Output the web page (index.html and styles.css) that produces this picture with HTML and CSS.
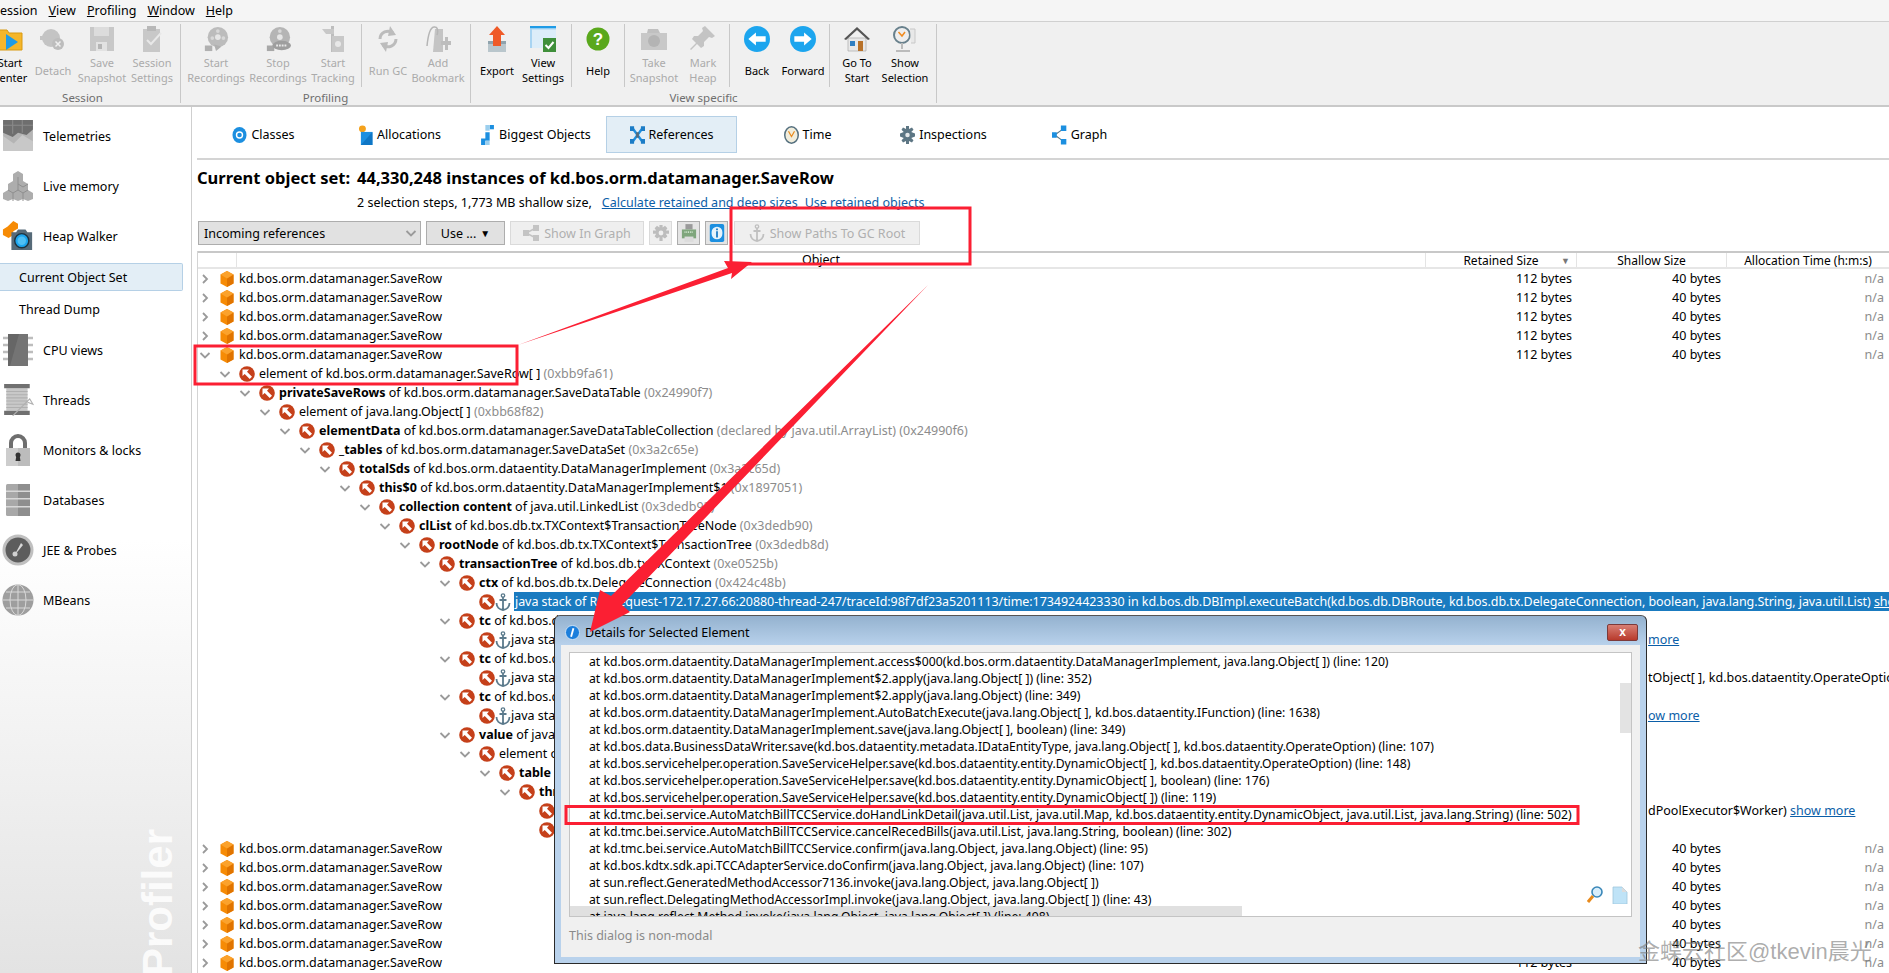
FILE: index.html
```html
<!DOCTYPE html>
<html lang="en">
<head>
<meta charset="utf-8">
<title>JProfiler Heap Walker</title>
<link rel="stylesheet" href="styles.css">
</head>
<body>
<svg class="sprite" aria-hidden="true">
  <symbol id="i-chev-r" viewBox="0 0 14 14"><path d="M5 3l4 4-4 4" fill="none" stroke="#9a9a9a" stroke-width="1.8"/></symbol>
  <symbol id="i-chev-d" viewBox="0 0 14 14"><path d="M2.5 5l4.5 4.5L11.500 5" fill="none" stroke="#9a9a9a" stroke-width="1.8"/></symbol>
  <symbol id="i-cube" viewBox="0 0 16 16"><path d="M8 0l6.500 3.500v9L8 16l-6.500-3.500v-9z" fill="#f68b05"/><path d="M8 7.500L14.500 3.500v9L8 16z" fill="#e07400"/><path d="M8 0l6.500 3.500L8 7.500 1.500 3.500z" fill="#fba22c"/></symbol>
  <symbol id="i-ref" viewBox="0 0 16 16"><circle cx="8" cy="8" r="7.800" fill="#c5401a"/><path d="M3.500 3.500h6.500L8 5.700l5 5-2.300 2.300-5-5-2.200 2z" fill="#fff"/></symbol>
  <symbol id="i-anchor" viewBox="0 0 16 18"><circle cx="8" cy="2.500" r="1.700" fill="none" stroke="#5b7a8c" stroke-width="1.300"/><path d="M8 4v13M4.500 7h7M1.500 10c0 4 3 6.500 6.500 7 3.500-.5 6.500-3 6.500-7" fill="none" stroke="#5b7a8c" stroke-width="1.800"/></symbol>

  <symbol id="t-start" viewBox="0 0 26 24"><path d="M1 3h9l2 3h13v17H1z" fill="#f5b62a" stroke="#d99a10"/><path d="M9 7l12 8-12 8z" fill="#1f9be6"/></symbol>
  <symbol id="t-detach" viewBox="0 0 26 24"><ellipse cx="11" cy="11" rx="9" ry="9" fill="#c4c4c4"/><path d="M0 9h6v4H0z" fill="#c4c4c4"/><circle cx="18" cy="17" r="6" fill="#bdbdbd"/><path d="M15.500 14.500l5 5m0-5l-5 5" stroke="#efefef" stroke-width="1.500"/></symbol>
  <symbol id="t-save" viewBox="0 0 26 24"><path d="M1 0h24v24H1z" fill="#c8c8c8"/><path d="M5 0h15v9H5z" fill="#dcdcdc"/><path d="M7 15h11v9H7z" fill="#e2e2e2"/><path d="M9 17h4v5H9z" fill="#b5b5b5"/></symbol>
  <symbol id="t-clip" viewBox="0 0 26 26"><path d="M4 3h17v23H4z" fill="#c8c8c8"/><path d="M8 0h9v5H8z" fill="#b8b8b8"/><path d="M8 14l4 4 10-11" fill="none" stroke="#e8e8e8" stroke-width="2"/></symbol>
  <symbol id="t-reel" viewBox="0 0 28 26"><circle cx="16" cy="11" r="11" fill="#bcbcbc"/><circle cx="16" cy="11" r="3" fill="#e6e6e6"/><circle cx="16" cy="4.500" r="2" fill="#d8d8d8"/><circle cx="10" cy="12" r="2" fill="#d8d8d8"/><circle cx="22" cy="12" r="2" fill="#d8d8d8"/><path d="M2 20h8v6H2z" fill="#b0b0b0"/><path d="M14 26l6-5-8-2z" fill="#b0b0b0"/></symbol>
  <symbol id="t-stop" viewBox="0 0 28 26"><circle cx="16" cy="11" r="11" fill="#b5b5b5"/><circle cx="16" cy="11" r="3" fill="#e6e6e6"/><circle cx="16" cy="4.500" r="2" fill="#d8d8d8"/><path d="M2 20h8v6H2z" fill="#a8a8a8"/><ellipse cx="18" cy="20" rx="10" ry="5" fill="#9e9e9e"/><path d="M12 20h12" stroke="#e8e8e8" stroke-width="2" stroke-dasharray="2 1"/></symbol>
  <symbol id="t-track" viewBox="0 0 26 26"><path d="M11 0h3v26h-3z" fill="#bdbdbd"/><path d="M2 3h12v5H6z" fill="#c8c8c8"/><path d="M12 10h12v16H12z" fill="#c8c8c8"/><circle cx="18" cy="18" r="3" fill="#e8e8e8"/></symbol>
  <symbol id="t-gc" viewBox="0 0 26 26"><path d="M5 13a8 8 0 0 1 13-6M21 13a8 8 0 0 1-13 6" fill="none" stroke="#bcbcbc" stroke-width="3"/><path d="M15 0l6 9-8 1zM11 26l-6-9 8-1z" fill="#bcbcbc"/></symbol>
  <symbol id="t-mark" viewBox="0 0 26 26"><path d="M10 3h8v23H8z" fill="#c4c4c4"/><path d="M2 20C3 10 5 0 10 1c3 0 3 5 2 8" fill="none" stroke="#b5b5b5" stroke-width="1.500"/><path d="M16 15h4v-4h3v4h3v4h-3v5h-3v-5h-4z" fill="#bdbdbd"/></symbol>
  <symbol id="t-export" viewBox="0 0 20 26"><path d="M1 15h18v11H1z" fill="#b9c6cc"/><path d="M1 15h18v3H1z" fill="#8fa3ad"/><path d="M10 0l8 9h-4v11H6V9H2z" fill="#ef5a28"/></symbol>
  <symbol id="t-view" viewBox="0 0 26 26"><path d="M0 0h26v22H0z" fill="#dcedf9"/><path d="M0 0h26v2.500H0z" fill="#1f9be6"/><path d="M0 2.500h26v1H0zM0 3.500v18.500h2V3.500z" fill="#a8d4f2"/><path d="M13 12h13v14H13z" fill="#3f8f3a"/><path d="M15.500 19l3 3 5-6" fill="none" stroke="#fff" stroke-width="2"/></symbol>
  <symbol id="t-cam" viewBox="0 0 26 22"><path d="M0 5h26v17H0z" fill="#c8c8c8"/><path d="M7 1h10l2 4H6z" fill="#c0c0c0"/><circle cx="13" cy="13" r="6" fill="#b4b4b4"/></symbol>
  <symbol id="t-pin" viewBox="0 0 26 26"><path d="M15 0l10 10-3 2-3-1-5 5 0 4-3 2-4-4-6 6-1-1 6-6-4-4 2-3 4 0 5-5-1-3z" fill="#c4c4c4"/></symbol>
  <symbol id="t-back" viewBox="0 0 24 24"><circle cx="12" cy="12" r="12" fill="#1ca5ee"/><path d="M4 12l7-6v3.500h9v5h-9V18z" fill="#fff"/></symbol>
  <symbol id="t-fwd" viewBox="0 0 24 24"><circle cx="12" cy="12" r="12" fill="#1ca5ee"/><path d="M20 12l-7-6v3.500H4v5h9V18z" fill="#fff"/></symbol>
  <symbol id="t-home" viewBox="0 0 26 26"><path d="M4 12h18v13H4z" fill="#e8e8e8" stroke="#aaa" stroke-width=".7"/><path d="M0 13L13 1l13 12-2 1L13 4 2 14z" fill="#555"/><path d="M14 15h5v10h-5z" fill="#b8722a"/><path d="M6 15h5v5H6z" fill="#2f7fc2"/></symbol>
  <symbol id="t-clock" viewBox="0 0 24 26"><circle cx="9" cy="9" r="8" fill="#eee" stroke="#68808c" stroke-width="2"/><path d="M5.500 6L9 10l3-4" fill="none" stroke="#f08a1e" stroke-width="1.500"/><path d="M9 17v6M3 25h14" stroke="#bbb" stroke-width="2"/><path d="M17 3h5v14h-4" fill="#e8e8e8" stroke="#c8c8c8"/></symbol>

  <symbol id="s-tele" viewBox="0 0 30 30"><rect x="1" y="0" width="28" height="29" rx="2" fill="#b4b4b4"/><path d="M1 0h28v9l-6 5-8-2-5 4-9-4z" fill="#6e6e6e"/><path d="M1 15l10 7 8-8 10 6v9H1z" fill="#c8c8c8"/><path d="M10 0v13M19 0v12M1 5h28" stroke="#8a8a8a"/></symbol>
  <symbol id="s-live" viewBox="0 0 32 30"><path d="M16 0l5 3v7l5 3v6l5 3v6l-5 2-5-2-5 2-5-2-5 2-5-2v-6l5-3v-6l5-3V3z" fill="#adadad"/><path d="M16 6v7l5 3 5-3M6 19l5 3 5-3 5 3 5-3M11 22v8M21 22v8M16 13v6" fill="none" stroke="#8f8f8f"/></symbol>
  <symbol id="s-heap" viewBox="0 0 34 32"><path d="M12 0l5 3v5l-5 3v4l-5 3-6-3V9l5-3z" fill="#f68b05"/><path d="M10 12h5l2-3h8l2 3h5v19H10z" fill="#566a78"/><circle cx="21" cy="21" r="7.500" fill="#1ca5ee" stroke="#1d3340" stroke-width="1.500"/><circle cx="21" cy="21" r="4.500" fill="#4fc0f5"/></symbol>
  <symbol id="s-cpu" viewBox="0 0 30 32"><path d="M5 0h20v32H5z" fill="#666"/><path d="M16 0h9v32H7z" fill="#787878" opacity=".8"/><path d="M0 4h5M0 11h5M0 18h5M0 25h5M25 4h5M25 11h5M25 18h5M25 25h5" stroke="#bdbdbd" stroke-width="2.500"/></symbol>
  <symbol id="s-thread" viewBox="0 0 30 30"><path d="M4 4h20v21H4z" fill="#c8c8c8"/><path d="M4 7h20M4 10h20M4 13h20M4 16h20M4 19h20M4 22h20" stroke="#b0b0b0"/><path d="M2 0h24v4H2zM2 25h24v4H2z" fill="#707070"/><path d="M10 30L26 14l3 5-5-2" fill="none" stroke="#b0b0b0"/></symbol>
  <symbol id="s-lock" viewBox="0 0 26 32"><path d="M6 15V9a7 7 0 0 1 14 0v6" fill="none" stroke="#6e6e6e" stroke-width="4"/><path d="M1 14h24v18H1z" fill="#cdcdcd"/><path d="M13 14h12v18H13z" fill="#bcbcbc"/><circle cx="13" cy="21" r="2.500" fill="#333"/><path d="M11.500 21h3l1 6h-5z" fill="#333"/></symbol>
  <symbol id="s-db" viewBox="0 0 26 32"><rect x="1" y="0" width="24" height="32" rx="1.500" fill="#a8a8a8"/><path d="M13 0h12v32H13z" fill="#8e8e8e"/><path d="M1 6.500h24v1.500H1zM1 14h24v1.500H1zM1 22h24v1.500H1z" fill="#d8d8d8"/></symbol>
  <symbol id="s-jee" viewBox="0 0 32 32"><circle cx="16" cy="16" r="15.500" fill="#c0c0c0"/><circle cx="16" cy="16" r="12.500" fill="#5d5d5d"/><path d="M12 22l7-13 2 2z" fill="#d8d8d8"/><circle cx="13" cy="20" r="2.500" fill="#d0d0d0"/></symbol>
  <symbol id="s-globe" viewBox="0 0 32 32"><circle cx="16" cy="16" r="15.500" fill="#9e9e9e"/><path d="M1 16h30M4 8h24M4 24h24M16 1v30" stroke="#d8d8d8"/><ellipse cx="16" cy="16" rx="8" ry="15.500" fill="none" stroke="#d8d8d8"/></symbol>

  <symbol id="c-classes" viewBox="0 0 16 18"><ellipse cx="8" cy="9" rx="7.500" ry="8.500" fill="#1c8fe0"/><circle cx="8" cy="9" r="3.200" fill="none" stroke="#fff" stroke-width="1.500"/></symbol>
  <symbol id="c-alloc" viewBox="0 0 18 26"><circle cx="5" cy="5" r="4.500" fill="#f5a21c"/><path d="M3 9h15v17H3z" fill="#1c8fe0"/><path d="M3 26L18 9v17z" fill="#0f76c5"/></symbol>
  <symbol id="c-big" viewBox="0 0 18 28"><path d="M6 10h6v6H6zM0 19h6v9H0zM6 16h6v6H6z" fill="#1c8fe0"/><path d="M12 0h6v6h-6z" fill="#1c8fe0"/><path d="M6 0h6v8H6z" fill="#9ccfee"/><path d="M6 22h6v6H6z" fill="#9ccfee"/></symbol>
  <symbol id="c-refs" viewBox="0 0 22 26"><path d="M3 2l16 22M19 2L3 24" stroke="#1c8fe0" stroke-width="3.500"/><path d="M0 0h6v7H0zM16 0h6v7h-6zM0 19h6v7H0zM16 19h6v7h-6z" fill="#1c7cc6"/><path d="M9 9h4v8H9z" fill="#566a78"/></symbol>
  <symbol id="c-time" viewBox="0 0 20 24"><ellipse cx="10" cy="12" rx="9" ry="11" fill="#f1eddc" stroke="#55707f" stroke-width="2"/><path d="M6 7l4 7 4-7" fill="none" stroke="#e88a1c" stroke-width="1.600"/></symbol>
  <symbol id="c-gear" viewBox="0 0 20 24"><path d="M8 0h4v4l4-2 2 3-3 3 5 2v4l-5 2 3 3-2 3-4-2v4H8v-4l-4 2-2-3 3-3-5-2v-4l5-2-3-3 2-3 4 2z" fill="#5d7684"/><circle cx="10" cy="12" r="3" fill="#e4e8ea"/></symbol>
  <symbol id="c-graph" viewBox="0 0 22 28"><path d="M4 14L18 4M4 14l14 10" stroke="#5d7684" stroke-width="1.500"/><path d="M0 10h7v8H0zM13 0h8v8h-8zM13 20h8v8h-8z" fill="#1c8fe0"/></symbol>

  <symbol id="d-info" viewBox="0 0 16 16"><circle cx="8" cy="8" r="7.500" fill="#1c7fdc" stroke="#cfe3f6"/><path d="M9 3.500l-2.500 9" stroke="#fff" stroke-width="2"/></symbol>
  <symbol id="d-search" viewBox="0 0 16 18"><circle cx="10" cy="6" r="5" fill="#d8eefb" stroke="#3a87b8" stroke-width="1.600"/><path d="M6 10l-5 6" stroke="#e88a1c" stroke-width="3"/></symbol>
  <symbol id="d-doc" viewBox="0 0 16 18"><path d="M1 1h9l5 5v12H1z" fill="#bfe3f7" stroke="#9fc6dd" stroke-width=".8"/><path d="M10 1v5h5z" fill="#dcdcdc"/></symbol>
  <symbol id="b-graph" viewBox="0 0 16 16"><path d="M3 8l10-5M3 8l10 5" stroke="#c4c4c4" stroke-width="1.500"/><path d="M0 5h6v6H0zM10 0h6v6h-6zM10 10h6v6h-6z" fill="#c4c4c4"/></symbol>
  <symbol id="b-gear" viewBox="0 0 20 20"><path d="M8 0h4v3l3-2 3 3-2 3h4v4h-4l2 3-3 3-3-2v5H8v-5l-3 2-3-3 2-3H0V7h4L2 4l3-3 3 2z" fill="#bdbdbd"/><circle cx="10" cy="10" r="3" fill="#efefef"/></symbol>
  <symbol id="b-print" viewBox="0 0 18 20"><path d="M5 0h8v6H5z" fill="#9a9a9a"/><path d="M1 6h16v10H1z" fill="#7fa67c"/><path d="M4 14h10v6H4z" fill="#dcdcdc"/><path d="M4 9h10" stroke="#d6ead4" stroke-dasharray="1 1" stroke-width="2"/></symbol>
  <symbol id="b-inf" viewBox="0 0 16 20"><rect width="16" height="20" rx="2" fill="#1c8fe0"/><rect x="2" y="3" width="12" height="14" rx="6" fill="#e6f3fb"/><path d="M7 5h2v2H7zM7 8h2v7H7z" fill="#1c7cc6"/></symbol>
  <symbol id="b-anchor" viewBox="0 0 16 18"><circle cx="8" cy="2.500" r="1.700" fill="none" stroke="#c0c0c0" stroke-width="1.300"/><path d="M8 4v13M4.500 7h7M1.500 10c0 4 3 6.500 6.500 7 3.500-.5 6.500-3 6.500-7" fill="none" stroke="#c0c0c0" stroke-width="1.800"/></symbol>
</svg>

<div class="app">
  <nav class="menu">
    <span class="m-session">ession</span>
    <span><u>V</u>iew</span>
    <span><u>P</u>rofiling</span>
    <span><u>W</u>indow</span>
    <span><u>H</u>elp</span>
  </nav>

  <div class="toolbar">
    <section class="grp g-session">
      <div class="cluster pr9">
        <div class="tool w50"><svg class="ti ti-start"><use href="#t-start"/></svg><span class="lab">Start<br>Center</span></div>
        <div class="tool w36 off"><svg class="ti"><use href="#t-detach"/></svg><span class="lab">Detach</span></div>
        <div class="tool w62 off"><svg class="ti"><use href="#t-save"/></svg><span class="lab">Save<br>Snapshot</span></div>
        <div class="tool w38 off"><svg class="ti"><use href="#t-clip"/></svg><span class="lab">Session<br>Settings</span></div>
      </div>
      <div class="gl">Session</div>
    </section>
    <section class="grp g-profiling">
      <div class="clusters">
        <div class="cluster sep">
          <div class="tool w70 off"><svg class="ti"><use href="#t-reel"/></svg><span class="lab">Start<br>Recordings</span></div>
          <div class="tool w54 off"><svg class="ti"><use href="#t-stop"/></svg><span class="lab">Stop<br>Recordings</span></div>
          <div class="tool w56 off"><svg class="ti"><use href="#t-track"/></svg><span class="lab">Start<br>Tracking</span></div>
        </div>
        <div class="cluster pr7">
          <div class="tool w52 off"><svg class="ti"><use href="#t-gc"/></svg><span class="lab">Run GC</span></div>
          <div class="tool w48 off"><svg class="ti"><use href="#t-mark"/></svg><span class="lab">Add<br>Bookmark</span></div>
        </div>
      </div>
      <div class="gl">Profiling</div>
    </section>
    <section class="grp g-view">
      <div class="clusters">
        <div class="cluster sep pr8">
          <div class="tool w52"><svg class="ti"><use href="#t-export"/></svg><span class="lab">Export</span></div>
          <div class="tool w40"><svg class="ti"><use href="#t-view"/></svg><span class="lab">View<br>Settings</span></div>
        </div>
        <div class="cluster sep">
          <div class="tool w52"><svg class="ti ti-help" viewBox="0 0 24 24"><circle cx="12" cy="12" r="11.500" fill="#5aa81c"/><text x="12" y="18" class="help-q">?</text></svg><span class="lab">Help</span></div>
        </div>
        <div class="cluster sep pr6">
          <div class="tool w58 off"><svg class="ti"><use href="#t-cam"/></svg><span class="lab">Take<br>Snapshot</span></div>
          <div class="tool w40 off"><svg class="ti"><use href="#t-pin"/></svg><span class="lab">Mark<br>Heap</span></div>
        </div>
        <div class="cluster sep pr7">
          <div class="tool w54"><svg class="ti"><use href="#t-back"/></svg><span class="lab">Back</span></div>
          <div class="tool w38"><svg class="ti"><use href="#t-fwd"/></svg><span class="lab">Forward</span></div>
        </div>
        <div class="cluster pr8">
          <div class="tool w54"><svg class="ti"><use href="#t-home"/></svg><span class="lab">Go To<br>Start</span></div>
          <div class="tool w42"><svg class="ti"><use href="#t-clock"/></svg><span class="lab">Show<br>Selection</span></div>
        </div>
      </div>
      <div class="gl">View specific</div>
    </section>
  </div>

  <div class="work">
    <aside class="side">
      <div class="s-item"><svg class="si"><use href="#s-tele"/></svg>Telemetries</div>
      <div class="s-item"><svg class="si"><use href="#s-live"/></svg>Live memory</div>
      <div class="s-item"><svg class="si"><use href="#s-heap"/></svg>Heap Walker</div>
      <div class="s-sub s-sel">Current Object Set</div>
      <div class="s-sub s-td">Thread Dump</div>
      <div class="s-item s-cpu"><svg class="si"><use href="#s-cpu"/></svg>CPU views</div>
      <div class="s-item"><svg class="si"><use href="#s-thread"/></svg>Threads</div>
      <div class="s-item"><svg class="si"><use href="#s-lock"/></svg>Monitors &amp; locks</div>
      <div class="s-item"><svg class="si"><use href="#s-db"/></svg>Databases</div>
      <div class="s-item"><svg class="si"><use href="#s-jee"/></svg>JEE &amp; Probes</div>
      <div class="s-item"><svg class="si"><use href="#s-globe"/></svg>MBeans</div>
      <div class="brand">Profiler</div>
    </aside>

    <main class="main">
      <div class="tabs">
        <div class="tab"><svg class="tic"><use href="#c-classes"/></svg>Classes</div>
        <div class="tab"><svg class="tic"><use href="#c-alloc"/></svg>Allocations</div>
        <div class="tab"><svg class="tic"><use href="#c-big"/></svg>Biggest Objects</div>
        <div class="tab active"><svg class="tic"><use href="#c-refs"/></svg>References</div>
        <div class="tab"><svg class="tic"><use href="#c-time"/></svg>Time</div>
        <div class="tab"><svg class="tic"><use href="#c-gear"/></svg>Inspections</div>
        <div class="tab"><svg class="tic"><use href="#c-graph"/></svg>Graph</div>
      </div>

      <h1 class="title"><span class="t-a">Current object set:</span><span>44,330,248 instances of kd.bos.orm.datamanager.SaveRow</span></h1>
      <p class="sub">2 selection steps, 1,773 MB shallow size,<a class="lnk l-a">Calculate retained and deep sizes</a><a class="lnk l-b">Use retained objects</a></p>

      <div class="controls">
        <div class="btn combo">Incoming references<svg class="combo-c"><use href="#i-chev-d"/></svg></div>
        <div class="btn use">Use ... <span class="tri">▼</span></div>
        <div class="btn dis graph-b"><svg class="bi"><use href="#b-graph"/></svg>Show In Graph</div>
        <div class="btn dis sq"><svg class="bi"><use href="#b-gear"/></svg></div>
        <div class="btn sq on"><svg class="bi"><use href="#b-print"/></svg></div>
        <div class="btn sq on"><svg class="bi"><use href="#b-inf"/></svg></div>
        <div class="btn dis paths"><svg class="bi"><use href="#b-anchor"/></svg>Show Paths To GC Root</div>
      </div>

      <div class="tree">
        <div class="head">
          <div class="h0"></div><div class="h-obj">Object</div>
          <div class="hc h-ret">Retained Size<span class="sort">▼</span></div>
          <div class="hc h-sh">Shallow Size</div>
          <div class="hc h-al">Allocation Time (h:m:s)</div>
        </div>
        <div class="body">
          <div class="row"><div class="o l0"><svg class="ch"><use href="#i-chev-r"/></svg><svg class="ic"><use href="#i-cube"/></svg><span>kd.bos.orm.datamanager.SaveRow</span></div><div class="n">112 bytes</div><div class="n">40 bytes</div><div class="n na">n/a</div></div>
          <div class="row"><div class="o l0"><svg class="ch"><use href="#i-chev-r"/></svg><svg class="ic"><use href="#i-cube"/></svg><span>kd.bos.orm.datamanager.SaveRow</span></div><div class="n">112 bytes</div><div class="n">40 bytes</div><div class="n na">n/a</div></div>
          <div class="row"><div class="o l0"><svg class="ch"><use href="#i-chev-r"/></svg><svg class="ic"><use href="#i-cube"/></svg><span>kd.bos.orm.datamanager.SaveRow</span></div><div class="n">112 bytes</div><div class="n">40 bytes</div><div class="n na">n/a</div></div>
          <div class="row"><div class="o l0"><svg class="ch"><use href="#i-chev-r"/></svg><svg class="ic"><use href="#i-cube"/></svg><span>kd.bos.orm.datamanager.SaveRow</span></div><div class="n">112 bytes</div><div class="n">40 bytes</div><div class="n na">n/a</div></div>
          <div class="row"><div class="o l0"><svg class="ch"><use href="#i-chev-d"/></svg><svg class="ic"><use href="#i-cube"/></svg><span>kd.bos.orm.datamanager.SaveRow</span></div><div class="n">112 bytes</div><div class="n">40 bytes</div><div class="n na">n/a</div></div>
          <div class="row"><div class="o l1"><svg class="ch"><use href="#i-chev-d"/></svg><svg class="ic"><use href="#i-ref"/></svg><span>element of kd.bos.orm.datamanager.SaveRow[ ] <i>(0xbb9fa61)</i></span></div></div>
          <div class="row"><div class="o l2"><svg class="ch"><use href="#i-chev-d"/></svg><svg class="ic"><use href="#i-ref"/></svg><span><b>privateSaveRows</b> of kd.bos.orm.datamanager.SaveDataTable <i>(0x24990f7)</i></span></div></div>
          <div class="row"><div class="o l3"><svg class="ch"><use href="#i-chev-d"/></svg><svg class="ic"><use href="#i-ref"/></svg><span>element of java.lang.Object[ ] <i>(0xbb68f82)</i></span></div></div>
          <div class="row"><div class="o l4"><svg class="ch"><use href="#i-chev-d"/></svg><svg class="ic"><use href="#i-ref"/></svg><span><b>elementData</b> of kd.bos.orm.datamanager.SaveDataTableCollection <i>(declared by java.util.ArrayList) (0x24990f6)</i></span></div></div>
          <div class="row"><div class="o l5"><svg class="ch"><use href="#i-chev-d"/></svg><svg class="ic"><use href="#i-ref"/></svg><span><b>_tables</b> of kd.bos.orm.datamanager.SaveDataSet <i>(0x3a2c65e)</i></span></div></div>
          <div class="row"><div class="o l6"><svg class="ch"><use href="#i-chev-d"/></svg><svg class="ic"><use href="#i-ref"/></svg><span><b>totalSds</b> of kd.bos.orm.dataentity.DataManagerImplement <i>(0x3a2c65d)</i></span></div></div>
          <div class="row"><div class="o l7"><svg class="ch"><use href="#i-chev-d"/></svg><svg class="ic"><use href="#i-ref"/></svg><span><b>this$0</b> of kd.bos.orm.dataentity.DataManagerImplement$1 <i>(0x1897051)</i></span></div></div>
          <div class="row"><div class="o l8"><svg class="ch"><use href="#i-chev-d"/></svg><svg class="ic"><use href="#i-ref"/></svg><span><b>collection content</b> of java.util.LinkedList <i>(0x3dedb92)</i></span></div></div>
          <div class="row"><div class="o l9"><svg class="ch"><use href="#i-chev-d"/></svg><svg class="ic"><use href="#i-ref"/></svg><span><b>clList</b> of kd.bos.db.tx.TXContext$TransactionTreeNode <i>(0x3dedb90)</i></span></div></div>
          <div class="row"><div class="o l10"><svg class="ch"><use href="#i-chev-d"/></svg><svg class="ic"><use href="#i-ref"/></svg><span><b>rootNode</b> of kd.bos.db.tx.TXContext$TransactionTree <i>(0x3dedb8d)</i></span></div></div>
          <div class="row"><div class="o l11"><svg class="ch"><use href="#i-chev-d"/></svg><svg class="ic"><use href="#i-ref"/></svg><span><b>transactionTree</b> of kd.bos.db.tx.TXContext <i>(0xe0525b)</i></span></div></div>
          <div class="row"><div class="o l12"><svg class="ch"><use href="#i-chev-d"/></svg><svg class="ic"><use href="#i-ref"/></svg><span><b>ctx</b> of kd.bos.db.tx.DelegateConnection <i>(0x424c48b)</i></span></div></div>
          <div class="row wide"><div class="o l13"><span class="ch"></span><svg class="ic"><use href="#i-ref"/></svg><svg class="an"><use href="#i-anchor"/></svg></div><div class="sel">java stack of RpcRequest-172.17.27.66:20880-thread-247/traceId:98f7df23a5201113/time:1734924423330 in kd.bos.db.DBImpl.executeBatch(kd.bos.db.DBRoute, kd.bos.db.tx.DelegateConnection, boolean, java.lang.String, java.util.List) <u>show more</u></div></div>
          <div class="row wide"><div class="o l12"><svg class="ch"><use href="#i-chev-d"/></svg><svg class="ic"><use href="#i-ref"/></svg><span><b>tc</b> of kd.bos.db.tx.DelegateConnection</span></div></div>
          <div class="row wide"><div class="o l13"><span class="ch"></span><svg class="ic"><use href="#i-ref"/></svg><svg class="an"><use href="#i-anchor"/></svg><span>java stack of RpcRequest</span></div><div class="tail"><a class="lnk">more</a></div></div>
          <div class="row wide"><div class="o l12"><svg class="ch"><use href="#i-chev-d"/></svg><svg class="ic"><use href="#i-ref"/></svg><span><b>tc</b> of kd.bos.db.tx.DelegateConnection</span></div></div>
          <div class="row wide"><div class="o l13"><span class="ch"></span><svg class="ic"><use href="#i-ref"/></svg><svg class="an"><use href="#i-anchor"/></svg><span>java stack of RpcRequest</span></div><div class="tail">tObject[ ], kd.bos.dataentity.OperateOption</div></div>
          <div class="row wide"><div class="o l12"><svg class="ch"><use href="#i-chev-d"/></svg><svg class="ic"><use href="#i-ref"/></svg><span><b>tc</b> of kd.bos.db.tx.DelegateConnection</span></div></div>
          <div class="row wide"><div class="o l13"><span class="ch"></span><svg class="ic"><use href="#i-ref"/></svg><svg class="an"><use href="#i-anchor"/></svg><span>java stack of RpcRequest</span></div><div class="tail"><a class="lnk">ow more</a></div></div>
          <div class="row wide"><div class="o l12"><svg class="ch"><use href="#i-chev-d"/></svg><svg class="ic"><use href="#i-ref"/></svg><span><b>value</b> of java.lang.ThreadLocal</span></div></div>
          <div class="row wide"><div class="o l13"><svg class="ch"><use href="#i-chev-d"/></svg><svg class="ic"><use href="#i-ref"/></svg><span>element of java.lang.Object</span></div></div>
          <div class="row wide"><div class="o l14"><svg class="ch"><use href="#i-chev-d"/></svg><svg class="ic"><use href="#i-ref"/></svg><span><b>table</b> of java.lang.ThreadLocal</span></div></div>
          <div class="row wide"><div class="o l15"><svg class="ch"><use href="#i-chev-d"/></svg><svg class="ic"><use href="#i-ref"/></svg><span><b>threadLocals</b> of java.lang.Thread</span></div></div>
          <div class="row wide"><div class="o l16"><span class="ch"></span><svg class="ic"><use href="#i-ref"/></svg><span>java stack</span></div><div class="tail">dPoolExecutor$Worker) <a class="lnk">show more</a></div></div>
          <div class="row wide"><div class="o l16"><span class="ch"></span><svg class="ic"><use href="#i-ref"/></svg><span>java stack</span></div></div>
          <div class="row"><div class="o l0"><svg class="ch"><use href="#i-chev-r"/></svg><svg class="ic"><use href="#i-cube"/></svg><span>kd.bos.orm.datamanager.SaveRow</span></div><div class="n">112 bytes</div><div class="n">40 bytes</div><div class="n na">n/a</div></div>
          <div class="row"><div class="o l0"><svg class="ch"><use href="#i-chev-r"/></svg><svg class="ic"><use href="#i-cube"/></svg><span>kd.bos.orm.datamanager.SaveRow</span></div><div class="n">112 bytes</div><div class="n">40 bytes</div><div class="n na">n/a</div></div>
          <div class="row"><div class="o l0"><svg class="ch"><use href="#i-chev-r"/></svg><svg class="ic"><use href="#i-cube"/></svg><span>kd.bos.orm.datamanager.SaveRow</span></div><div class="n">112 bytes</div><div class="n">40 bytes</div><div class="n na">n/a</div></div>
          <div class="row"><div class="o l0"><svg class="ch"><use href="#i-chev-r"/></svg><svg class="ic"><use href="#i-cube"/></svg><span>kd.bos.orm.datamanager.SaveRow</span></div><div class="n">112 bytes</div><div class="n">40 bytes</div><div class="n na">n/a</div></div>
          <div class="row"><div class="o l0"><svg class="ch"><use href="#i-chev-r"/></svg><svg class="ic"><use href="#i-cube"/></svg><span>kd.bos.orm.datamanager.SaveRow</span></div><div class="n">112 bytes</div><div class="n">40 bytes</div><div class="n na">n/a</div></div>
          <div class="row"><div class="o l0"><svg class="ch"><use href="#i-chev-r"/></svg><svg class="ic"><use href="#i-cube"/></svg><span>kd.bos.orm.datamanager.SaveRow</span></div><div class="n">112 bytes</div><div class="n">40 bytes</div><div class="n na">n/a</div></div>
          <div class="row"><div class="o l0"><svg class="ch"><use href="#i-chev-r"/></svg><svg class="ic"><use href="#i-cube"/></svg><span>kd.bos.orm.datamanager.SaveRow</span></div><div class="n">112 bytes</div><div class="n">40 bytes</div><div class="n na">n/a</div></div>
        </div>
      </div>
    </main>
  </div>
</div>

<div class="dialog">
  <div class="d-title">
    <svg class="d-info"><use href="#d-info"/></svg>
    <span>Details for Selected Element</span>
    <button class="d-close">x</button>
  </div>
  <div class="d-inner">
    <div class="d-box">
      <div class="d-hbar"></div>
      <div class="d-vbar"></div>
      <div class="d-lines">
        <div>at kd.bos.orm.dataentity.DataManagerImplement.access$000(kd.bos.orm.dataentity.DataManagerImplement, java.lang.Object[ ]) (line: 120)</div>
        <div>at kd.bos.orm.dataentity.DataManagerImplement$2.apply(java.lang.Object[ ]) (line: 352)</div>
        <div>at kd.bos.orm.dataentity.DataManagerImplement$2.apply(java.lang.Object) (line: 349)</div>
        <div>at kd.bos.orm.dataentity.DataManagerImplement.AutoBatchExecute(java.lang.Object[ ], kd.bos.dataentity.IFunction) (line: 1638)</div>
        <div>at kd.bos.orm.dataentity.DataManagerImplement.save(java.lang.Object[ ], boolean) (line: 349)</div>
        <div>at kd.bos.data.BusinessDataWriter.save(kd.bos.dataentity.metadata.IDataEntityType, java.lang.Object[ ], kd.bos.dataentity.OperateOption) (line: 107)</div>
        <div>at kd.bos.servicehelper.operation.SaveServiceHelper.save(kd.bos.dataentity.entity.DynamicObject[ ], kd.bos.dataentity.OperateOption) (line: 148)</div>
        <div>at kd.bos.servicehelper.operation.SaveServiceHelper.save(kd.bos.dataentity.entity.DynamicObject[ ], boolean) (line: 176)</div>
        <div>at kd.bos.servicehelper.operation.SaveServiceHelper.save(kd.bos.dataentity.entity.DynamicObject[ ]) (line: 119)</div>
        <div>at kd.tmc.bei.service.AutoMatchBillTCCService.doHandLinkDetail(java.util.List, java.util.Map, kd.bos.dataentity.entity.DynamicObject, java.util.List, java.lang.String) (line: 502)</div>
        <div>at kd.tmc.bei.service.AutoMatchBillTCCService.cancelRecedBills(java.util.List, java.lang.String, boolean) (line: 302)</div>
        <div>at kd.tmc.bei.service.AutoMatchBillTCCService.confirm(java.lang.Object, java.lang.Object) (line: 95)</div>
        <div>at kd.bos.kdtx.sdk.api.TCCAdapterService.doConfirm(java.lang.Object, java.lang.Object) (line: 107)</div>
        <div>at sun.reflect.GeneratedMethodAccessor7136.invoke(java.lang.Object, java.lang.Object[ ])</div>
        <div>at sun.reflect.DelegatingMethodAccessorImpl.invoke(java.lang.Object, java.lang.Object[ ]) (line: 43)</div>
        <div>at java.lang.reflect.Method.invoke(java.lang.Object, java.lang.Object[ ]) (line: 498)</div>
      </div>
      <div class="d-tools"><svg class="d-t"><use href="#d-search"/></svg><svg class="d-t"><use href="#d-doc"/></svg></div>
    </div>
    <div class="d-note">This dialog is non-modal</div>
  </div>
</div>

<svg class="notes" viewBox="0 0 1889 973" aria-hidden="true">
  <rect x="731" y="208" width="239" height="56" class="nr"/>
  <rect x="195" y="346" width="322" height="38" class="nr"/>
  <rect x="566" y="806.500" width="1012" height="17" class="nr"/>
  <path d="M518 345L728 268 724 261 752 262 731 279 732 273z" class="nf"/>
  <path d="M928 285L622 605 630 612 590 632 600 590 611 596z" class="nf"/>
</svg>
<div class="wm">金蝶云社区@tkevin晨光</div>
</body>
</html>
```
FILE: styles.css
```css
* { box-sizing: border-box; }
html, body { margin: 0; padding: 0; }
body {
  width: 1889px; height: 973px; overflow: hidden; position: relative; background: #fff;
  font-family: "Noto Sans", "Open Sans", "Liberation Sans", sans-serif; font-size: 12.5px; color: #000;
}
.sprite { position: absolute; width: 0; height: 0; }
.app { display: flex; flex-direction: column; height: 973px; }

.menu { height: 22px; display: flex; align-items: center; gap: 11px; background: #f5f5f5; border-bottom: 1px solid #d0d0d0; flex: none; }
.m-session { margin-left: 0; }

.toolbar { height: 85px; flex: none; display: flex; padding-top: 2px; margin-left: -15px; background: #f0f0f0; border-bottom: 2px solid #c9c9c9; width: 1904px; }
.grp { display: flex; flex-direction: column; height: 79px; border-right: 1px solid #c8c8c8; flex: none; }
.g-session { width: 196px; }
.g-profiling { width: 290px; }
.g-view { width: 466px; }
.clusters { display: flex; height: 63px; }
.cluster { display: flex; height: 63px; flex: none; }
.sep { border-right: 1px solid #c8c8c8; }
.pr6 { padding-right: 6px; } .pr7 { padding-right: 7px; } .pr8 { padding-right: 8px; } .pr9 { padding-right: 9px; }
.gl { margin-top: 3px; height: 16px; line-height: 16px; text-align: center; color: #6e6e6e; font-size: 11.5px; }
.tool { display: flex; flex-direction: column; align-items: center; height: 63px; flex: none; }
.w36 { width: 36px; } .w38 { width: 38px; } .w40 { width: 40px; } .w42 { width: 42px; } .w48 { width: 48px; }
.w50 { width: 50px; } .w52 { width: 52px; } .w54 { width: 54px; } .w56 { width: 56px; } .w58 { width: 58px; } .w62 { width: 62px; } .w70 { width: 70px; }
.ti { width: 26px; height: 26px; margin-top: 2px; margin-bottom: 1px; flex: none; overflow: visible; }
.ti-help { width: 24px; height: 24px; margin-top: 3px; margin-bottom: 2px; }
.help-q { font: bold 17px "Liberation Sans", sans-serif; fill: #fff; text-anchor: middle; }
.lab { flex: 1; display: flex; flex-direction: column; justify-content: center; text-align: center; line-height: 15px; white-space: nowrap; font-size: 11px; }
.off .lab { color: #ababab; }

.work { flex: 1; display: flex; min-height: 0; }
.side { width: 192px; flex: none; position: relative; overflow: hidden; padding-top: 4px; border-right: 1px solid #cfcfcf; background: linear-gradient(#fff 50%, #e3e3e3 100%); }
.s-item { height: 50px; display: flex; align-items: center; padding-left: 2px; gap: 9px; }
.si { width: 32px; height: 32px; flex: none; }
.s-cpu { margin-top: 2px; }
.s-sub { height: 28px; display: flex; align-items: center; padding-left: 19px; }
.s-sel { width: 183px; margin-top: 2px; background: #e3eef6; border: 1px solid #b5d0e6; border-left: 0; border-radius: 0 2px 2px 0; padding-left: 19px; }
.s-td { margin-top: 4px; }
.brand { position: absolute; left: 135px; bottom: -3px; writing-mode: vertical-rl; transform: rotate(180deg); font: bold 42px "Liberation Sans", sans-serif; color: #fff; line-height: 46px; opacity: .85; }

.main { flex: 1; min-width: 0; padding-left: 5px; display: flex; flex-direction: column; }
.tabs { height: 53px; flex: none; display: flex; gap: 5px; padding: 9px 0 0 1px; border-bottom: 2px solid #d4d4d4; }
.tab { width: 131px; height: 37px; display: flex; align-items: center; justify-content: center; gap: 4px; border: 1px solid transparent; white-space: nowrap; }
.tab.active { background: #e3eef6; border-color: #b5d0e6; }
.tic { width: 15px; height: 20px; flex: none; }

.title { margin: 7px 0 0; height: 22px; line-height: 22px; font-size: 16.5px; font-weight: 700; display: flex; white-space: nowrap; }
.t-a { width: 160px; flex: none; }
.sub { margin: 5px 0 0; padding-left: 160px; height: 18px; line-height: 18px; white-space: nowrap; }
.lnk { color: #0b5ea8; text-decoration: underline; }
.l-a { margin-left: 10px; }
.l-b { margin-left: 7px; }

.controls { display: flex; gap: 5px; margin-top: 9px; height: 24px; margin-left: 1px; flex: none; }
.btn { height: 24px; display: flex; align-items: center; background: #e1e1e1; border: 1px solid #adadad; white-space: nowrap; flex: none; }
.combo { width: 223px; padding-left: 5px; justify-content: space-between; }
.combo-c { width: 14px; height: 14px; margin-right: 2px; }
.use { width: 79px; justify-content: center; gap: 4px; }
.tri { font-size: 10px; }
.dis { background: #efefef; border-color: #dadada; color: #b0b0b0; }
.graph-b { width: 134px; justify-content: center; gap: 5px; }
.sq { width: 23px; justify-content: center; }
.on { background: #e4e4e4; }
.paths { width: 186px; justify-content: center; gap: 5px; margin-left: 1px; }
.bi { width: 16px; height: 18px; flex: none; }

.tree { flex: 1; min-height: 0; margin-top: 6px; border-left: 1px solid #d4d4d4; display: flex; flex-direction: column; overflow: hidden; }
.head { height: 18px; flex: none; display: flex; border-top: 2px solid #c8c8c8; border-bottom: 2px solid #e6e6e6; }
.h0 { width: 39px; border-right: 1px solid #e4e4e4; flex: none; }
.h-obj { width: 1188px; flex: none; text-align: center; line-height: 13px; padding-right: 20px; }
.hc { display: flex; align-items: center; justify-content: center; position: relative; border-left: 1px solid #e4e4e4; white-space: nowrap; font-size: 12px; }
.h-ret { width: 151px; } .h-sh { width: 150px; } .h-al { width: 163px; }
.sort { position: absolute; right: 6px; font-size: 9px; color: #777; }

.row { height: 19px; display: grid; grid-template-columns: 1227px 147px 149px 163px; line-height: 19px; white-space: nowrap; }
.row.wide { display: flex; }
.o { display: flex; align-items: center; min-width: 0; flex: none; }
.n { text-align: right; }
.na { color: #8c8c8c; }
i { font-style: normal; color: #8c8c8c; }
b { font-weight: 700; }
.ch { width: 14px; height: 14px; flex: none; }
.ic { width: 16px; height: 16px; margin: 0 4px 0 7px; flex: none; }
.an { width: 16px; height: 18px; margin-left: -4px; flex: none; }
.l0 { padding-left: 0; } .l1 { padding-left: 20px; } .l2 { padding-left: 40px; } .l3 { padding-left: 60px; } .l4 { padding-left: 80px; }
.l5 { padding-left: 100px; } .l6 { padding-left: 120px; } .l7 { padding-left: 140px; } .l8 { padding-left: 160px; } .l9 { padding-left: 180px; }
.l10 { padding-left: 200px; } .l11 { padding-left: 220px; } .l12 { padding-left: 240px; } .l13 { padding-left: 260px; } .l14 { padding-left: 280px; }
.l15 { padding-left: 300px; } .l16 { padding-left: 320px; }
.sel { flex: 1; min-width: 0; overflow: hidden; background: #1a7bc0; color: #fff; padding-left: 1px; margin-left: 3px; letter-spacing: -.07px; }
.tail { margin-left: auto; width: 241px; flex: none; overflow: hidden; }

.dialog { position: absolute; left: 554px; top: 615px; width: 1093px; height: 349px; border: 1px solid #2a2a2a; border-top-color: #555; border-radius: 6px 6px 0 0; background: linear-gradient(#94b2cf 0, #b9d2ec 30px, #b9d2ec 100%); padding: 0 6px 6px; display: flex; flex-direction: column; }
.d-title { height: 29px; flex: none; display: flex; align-items: center; gap: 5px; padding: 4px 0 0 4px; font-size: 12.5px; }
.d-info { width: 15px; height: 15px; }
.d-close { margin-left: auto; margin-right: 2px; margin-top: -1px; width: 31px; height: 17px; padding: 0; border: 1px solid #7c3a3a; border-radius: 2px; background: linear-gradient(#d87f74, #b83a2c); color: #fff; font: bold 12px/13px "Liberation Sans", sans-serif; }
.d-inner { flex: 1; min-height: 0; background: #f0f0f0; padding: 7px 8px 0; display: flex; flex-direction: column; }
.d-box { position: relative; height: 265px; flex: none; background: #fff; border: 1px solid #c4c4c4; overflow: hidden; }
.d-lines { position: relative; padding: 0 0 0 19px; line-height: 17px; white-space: nowrap; font-size: 12.2px; }
.d-hbar { position: absolute; left: 0; bottom: 0; width: 672px; height: 10px; background: #e0e0e0; }
.d-vbar { position: absolute; right: 0; top: 30px; width: 11px; height: 50px; background: #e3e3e3; }
.d-tools { position: absolute; right: 3px; bottom: 12px; display: flex; gap: 9px; }
.d-t { width: 16px; height: 18px; }
.d-note { margin-top: 10px; color: #8a8a8a; }

.notes { position: absolute; left: 0; top: 0; width: 1889px; height: 973px; pointer-events: none; }
.nr { fill: none; stroke: #fb1f33; stroke-width: 3; }
.nf { fill: #fb1f33; }
.wm { position: absolute; left: 1638px; top: 934px; font-family: "Liberation Sans", "Noto Sans CJK SC", sans-serif; font-size: 22px; line-height: 36px; color: rgba(120, 120, 120, .62); white-space: nowrap; }
```
